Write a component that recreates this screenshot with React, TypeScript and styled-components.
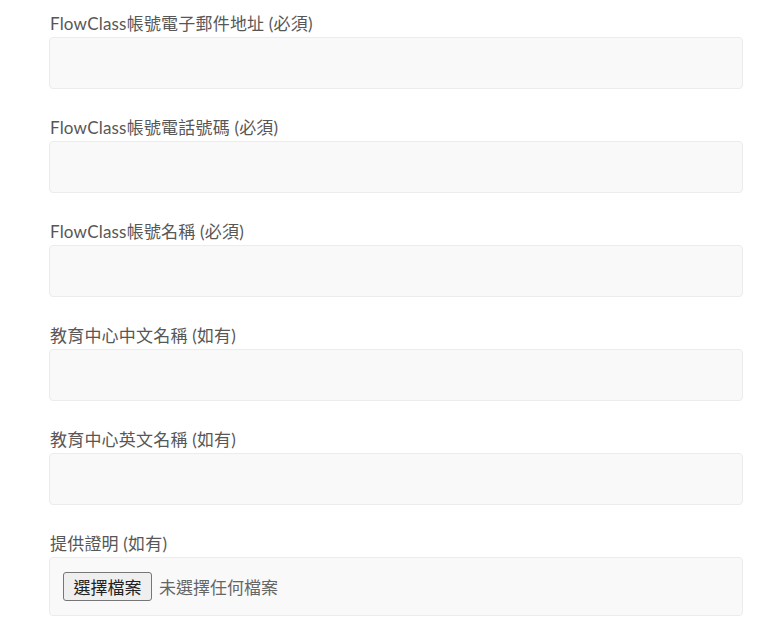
import React from "react";
import styled, { createGlobalStyle } from "styled-components";

const GlobalStyle = createGlobalStyle`
  html, body {
    margin: 0;
    padding: 0;
    background: #ffffff;
  }
  body {
    font-family: "Lato", "Noto Sans CJK TC", sans-serif;
  }
`;

const Form = styled.form`
  display: flex;
  flex-direction: column;
  gap: 28px;
  width: 694px;
  padding: 13px 0 0 49px;
`;

const Field = styled.div`
  display: flex;
  flex-direction: column;
  gap: 2px;
`;

const Label = styled.label`
  font-size: 17px;
  line-height: 22px;
  letter-spacing: 0.2px;
  color: #575757;
  padding-left: 1px;
`;

const TextInput = styled.input`
  box-sizing: border-box;
  height: 52px;
  width: 100%;
  margin: 0;
  background: #f9f9f9;
  border: 1px solid #ececec;
  border-radius: 4px;
  outline: none;
  padding: 0 14px;
  font-size: 15px;
  font-family: inherit;
`;

const FileBox = styled.div`
  box-sizing: border-box;
  height: 59px;
  display: flex;
  align-items: center;
  gap: 7px;
  padding: 0 13px;
  background: #f9f9f9;
  border: 1px solid #ececec;
  border-radius: 4px;
`;

const FileButton = styled.button`
  box-sizing: border-box;
  height: 29px;
  width: 89px;
  padding: 0;
  background: #efefef;
  border: 1px solid #767676;
  border-radius: 3px;
  font-family: "Noto Sans CJK TC", sans-serif;
  font-size: 17px;
  line-height: 27px;
  color: #222222;
`;

const FileName = styled.span`
  font-family: "Noto Sans CJK TC", sans-serif;
  font-size: 17px;
  color: #666666;
`;

const fields = [
  "FlowClass帳號電子郵件地址 (必須)",
  "FlowClass帳號電話號碼 (必須)",
  "FlowClass帳號名稱 (必須)",
  "教育中心中文名稱 (如有)",
  "教育中心英文名稱 (如有)",
];

export default function App() {
  return (
    <>
      <GlobalStyle />
      <Form>
        {fields.map((label) => (
          <Field key={label}>
            <Label>{label}</Label>
            <TextInput type="text" />
          </Field>
        ))}
        <Field>
          <Label>提供證明 (如有)</Label>
          <FileBox>
            <FileButton type="button">選擇檔案</FileButton>
            <FileName>未選擇任何檔案</FileName>
          </FileBox>
        </Field>
      </Form>
    </>
  );
}
